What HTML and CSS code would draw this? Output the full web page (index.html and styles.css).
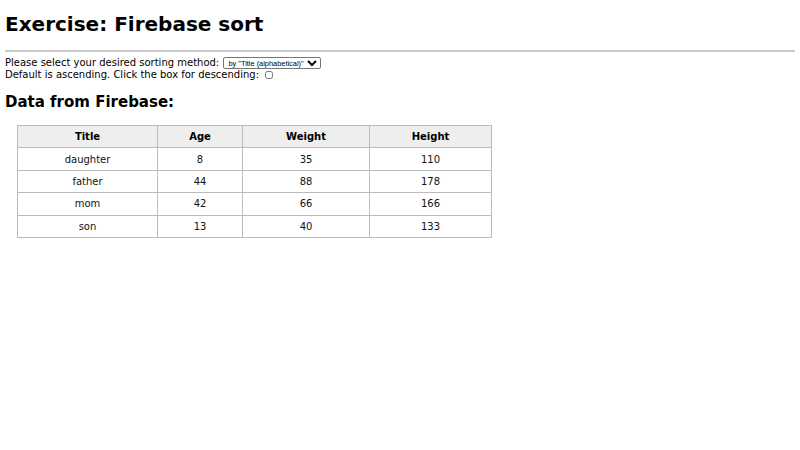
FILE: index.html
```html
<!DOCTYPE html>
<html>
<head>
<meta charset="utf-8">
<link rel="stylesheet" href="styles.css">
</head>
<body>
<h1 class="title">Exercise: Firebase sort</h1>
<hr class="rule">
<div class="controls">
  <div class="line">Please select your desired sorting method:
    <select class="sel"><option>by "Title (alphabetical)"</option></select>
  </div>
  <div class="line">Default is ascending. Click the box for descending:
    <input type="checkbox" class="chk">
  </div>
</div>
<h2 class="sub">Data from Firebase:</h2>
<table class="data">
  <thead>
    <tr><th class="c1">Title</th><th class="c2">Age</th><th class="c3">Weight</th><th class="c4">Height</th></tr>
  </thead>
  <tbody>
    <tr><td>daughter</td><td>8</td><td>35</td><td>110</td></tr>
    <tr><td>father</td><td>44</td><td>88</td><td>178</td></tr>
    <tr><td>mom</td><td>42</td><td>66</td><td>166</td></tr>
    <tr><td>son</td><td>13</td><td>40</td><td>133</td></tr>
  </tbody>
</table>
</body>
</html>
```
FILE: styles.css
```css
body {
  margin: 5px;
  font-family: "DejaVu Sans", sans-serif;
  font-size: 10px;
  color: #000;
  background: #fff;
}
.title {
  font-size: 20px;
  line-height: 23px;
  font-weight: bold;
  margin: 8px 0 14px 0;
}
.rule {
  border: none;
  border-top: 2px solid #ccc;
  margin: 0 0 5px 0;
}
.line {
  line-height: 12px;
  height: 12px;
}
.sel {
  font-family: "Liberation Sans", sans-serif;
  font-size: 7.4px;
  color: #000;
  background: #fff;
  border: 1px solid #767676;
  border-radius: 2px;
  height: 12px;
  padding: 0;
  margin: 0 0 0 1px;
  vertical-align: top;
}
.chk {
  width: 8px;
  height: 8px;
  margin: 0 0 0 3px;
  vertical-align: middle;
}
.sub {
  font-size: 15px;
  line-height: 18px;
  font-weight: bold;
  margin: 12px 0 14px 0;
}
.data {
  border-collapse: collapse;
  margin-left: 12px;
}
.data th, .data td {
  border: 1px solid #bbb;
  text-align: center;
  height: 21.4px;
  padding: 0;
  font-size: 10px;
  color: #111;
}
.data th {
  background: #eee;
  color: #000;
}
.c1 { width: 139px; }
.c2 { width: 84px; }
.c3 { width: 126px; }
.c4 { width: 121px; }
```
